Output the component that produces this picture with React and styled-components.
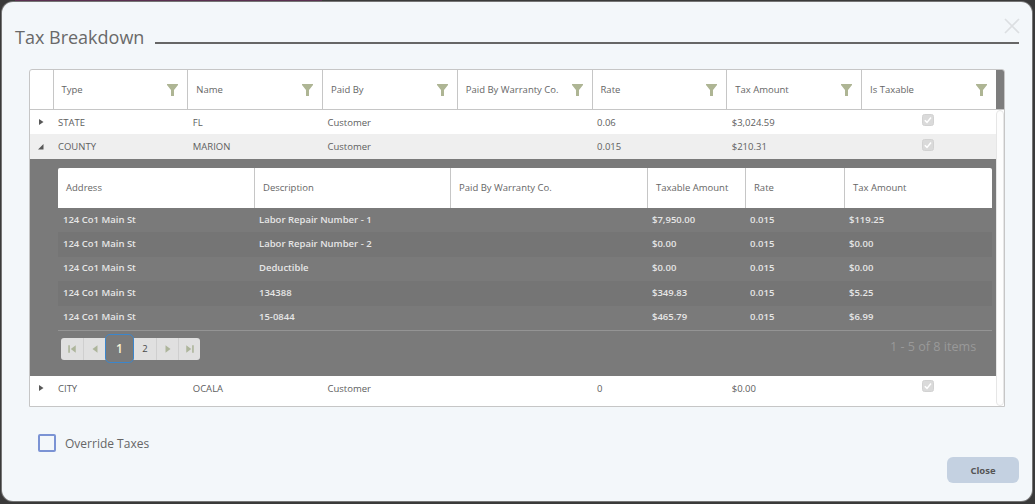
import React from 'react';
import styled, { createGlobalStyle } from 'styled-components';

const GlobalStyle = createGlobalStyle`
  html, body {
    margin: 0;
    padding: 0;
    background: #3a3a3a;
    font-family: "Open Sans", "Liberation Sans", sans-serif;
  }
`;

const Page = styled.div`
  width: 1035px;
  height: 504px;
  padding: 2px 3px 3px 2px;
  box-sizing: border-box;
  overflow: hidden;
  background: linear-gradient(#5a3050, #5a3050) 15px 0 / 307px 1px no-repeat, #3a3a3a;
`;

const Dialog = styled.div`
  position: relative;
  height: 100%;
  box-sizing: border-box;
  background: #f3f7fa;
  border-radius: 11px;
  box-shadow: 0 0 0 1px #757575;
  padding: 23px 13px 0 13px;
  display: flex;
  flex-direction: column;
`;

const TitleRow = styled.div`
  display: flex;
  align-items: flex-end;
  gap: 11px;
  height: 24px;
`;

const Title = styled.h2`
  margin: 0;
  font-size: 18px;
  line-height: 24px;
  font-weight: 400;
  color: #696969;
  white-space: nowrap;
`;

const TitleRule = styled.div`
  flex: 1;
  height: 2px;
  margin-bottom: 5px;
  background: #666;
`;

const CloseX = styled.button`
  position: absolute;
  top: 15px;
  right: 11px;
  width: 18px;
  height: 18px;
  padding: 0;
  border: 0;
  background: none;
  color: #dcdfe2;
`;

const Grid = styled.div`
  margin: 20px 0 0 14px;
  width: 976px;
  height: 338px;
  box-sizing: border-box;
  border: 1px solid #c6c6c6;
  border-top-left-radius: 3px;
  border-top-right-radius: 3px;
  background: #fff;
  position: relative;
  overflow: hidden;
`;

const MasterHeader = styled.div`
  display: grid;
  grid-template-columns: 22.5px repeat(7, 134.75px) 1fr;
  height: 39px;
  border-bottom: 1px solid #c6c6c6;
`;

const HeadCell = styled.div`
  display: flex;
  align-items: center;
  justify-content: space-between;
  padding: ${p => (p.$detail ? '0 0 2px 8px' : '0 9px 0 8px')};
  border-left: ${p => (p.$first ? '0' : '1px solid #c6c6c6')};
  font-size: 9.5px;
  color: #666;
  white-space: nowrap;
`;

const ScrollCap = styled.div`
  background: #7d7d7d;
`;

const Scroll = styled.div`
  position: absolute;
  top: 40px;
  right: 0;
  bottom: 0;
  width: 8px;
  box-sizing: border-box;
  background: #fdfdfd;
  border: 1px solid #e6e6e6;
  border-radius: 4px;
`;

const MasterRow = styled.div`
  display: grid;
  grid-template-columns: 22.5px repeat(7, 134.75px);
  align-items: center;
  box-sizing: border-box;
  height: ${p => p.$h}px;
  padding-bottom: ${p => p.$pad || 0}px;
  width: 966.25px;
  background: ${p => (p.$alt ? '#efefef' : '#fff')};
  font-size: 9.5px;
  color: #606060;
`;

const Cell = styled.div`
  padding-left: 5.5px;
  white-space: nowrap;
`;

const ArrowCell = styled.div`
  display: flex;
  justify-content: center;
  color: #585858;
`;

const CheckCell = styled.div`
  display: flex;
  justify-content: center;
  padding-bottom: 4px;
`;

const DetailArea = styled.div`
  width: 966.25px;
  height: 217px;
  box-sizing: border-box;
  background: #7a7a7a;
  padding: 9px 4px 0 28px;
`;

const DetailHeader = styled.div`
  display: grid;
  grid-template-columns: 196px 196px 197px 98px 99px 1fr;
  height: 40px;
  background: #fff;
  border-radius: 2px 2px 0 0;
`;

const DetailRow = styled.div`
  display: grid;
  grid-template-columns: 196px 196px 197px 98px 99px 1fr;
  align-items: center;
  box-sizing: border-box;
  height: 24.4px;
  padding-bottom: 2px;
  background: ${p => (p.$alt ? '#757575' : '#7a7a7a')};
  font-size: 9.5px;
  font-weight: 600;
  color: #e6e6e6;
`;

const DetailCell = styled.div`
  padding-left: 5px;
  white-space: nowrap;
`;

const Pager = styled.div`
  display: flex;
  align-items: flex-start;
  justify-content: space-between;
  height: 46px;
  border-top: 1px solid #949494;
  box-sizing: border-box;
  padding: 7px 16px 0 3px;
`;

const PagerButtons = styled.div`
  display: flex;
  align-items: center;
  height: 22px;
  border-radius: 3px;
  background: #e0e0e0;
`;

const PageBtn = styled.div`
  flex: none;
  width: 22px;
  height: 22px;
  box-sizing: border-box;
  display: flex;
  align-items: center;
  justify-content: center;
  border-left: ${p => (p.$first ? '0' : '1px solid #cfcfcf')};
  color: #adb59b;
`;

const PageNum = styled.div`
  flex: none;
  width: 22px;
  height: 22px;
  display: flex;
  align-items: center;
  justify-content: center;
  font-size: 9.5px;
  color: #4a4a4a;
`;

const CurrentPage = styled.div`
  flex: none;
  width: 29px;
  height: 29px;
  box-sizing: border-box;
  display: flex;
  align-items: center;
  justify-content: center;
  border: 1.5px solid #3b86cc;
  border-radius: 5px;
  background: #7a7a7a;
  font-size: 12px;
  font-weight: 600;
  color: #fbf3d6;
`;

const PagerInfo = styled.div`
  margin-top: -1px;
  font-size: 12.6px;
  line-height: 20px;
  color: #999;
`;

const Footer = styled.div`
  display: flex;
  align-items: center;
  gap: 9px;
  margin: 27px 0 0 23px;
  font-size: 12px;
  color: #666;
`;

const OverrideBox = styled.span`
  width: 18px;
  height: 18px;
  box-sizing: border-box;
  border: 2px solid #7b93d4;
  border-radius: 2px;
  background: #f3f7fa;
`;

const CloseButton = styled.button`
  position: absolute;
  right: 13px;
  bottom: 18px;
  width: 72px;
  height: 26px;
  border: 0;
  border-radius: 6px;
  background: #c4d1e1;
  color: #555;
  font-family: inherit;
  font-size: 9.5px;
  font-weight: 700;
`;

const Funnel = () => (
  <svg width="11" height="12" viewBox="0 0 11 12">
    <path d="M0 0h11v1L7 6v6H4V6L0 1z" fill="#aeb594" />
  </svg>
);

const Tri = ({ d, size = 8 }) => (
  <svg width={size} height={size} viewBox="0 0 8 8">
    <path d={d} fill="currentColor" />
  </svg>
);

const Tick = () => (
  <svg width="12" height="12" viewBox="0 0 12 12">
    <rect x="0.5" y="0.5" width="11" height="11" rx="2" fill="#dadada" stroke="#d2d2d2" />
    <path d="M2.8 6.2l2.2 2.2 4-4.8" fill="none" stroke="#fff" strokeWidth="1.5" />
  </svg>
);

const masterCols = ['Type', 'Name', 'Paid By', 'Paid By Warranty Co.', 'Rate', 'Tax Amount', 'Is Taxable'];
const detailCols = ['Address', 'Description', 'Paid By Warranty Co.', 'Taxable Amount', 'Rate', 'Tax Amount'];
const detailRows = [
  ['Labor Repair Number - 1', '$7,950.00', '$119.25'],
  ['Labor Repair Number - 2', '$0.00', '$0.00'],
  ['Deductible', '$0.00', '$0.00'],
  ['134388', '$349.83', '$5.25'],
  ['15-0844', '$465.79', '$6.99'],
];

const Row = ({ type, name, rate, tax, open, h, pad }) => (
  <MasterRow $alt={open} $h={h} $pad={pad}>
    <ArrowCell>{open ? <Tri d="M1 6.5h5.5V1z" /> : <Tri d="M2 1l4.5 3L2 7z" />}</ArrowCell>
    <Cell>{type}</Cell>
    <Cell>{name}</Cell>
    <Cell>Customer</Cell>
    <Cell />
    <Cell>{rate}</Cell>
    <Cell>{tax}</Cell>
    <CheckCell><Tick /></CheckCell>
  </MasterRow>
);

export default function App() {
  return (
    <Page>
      <GlobalStyle />
      <Dialog>
        <TitleRow>
          <Title>Tax Breakdown</Title>
          <TitleRule />
        </TitleRow>
        <CloseX aria-label="Close">
          <svg width="18" height="18" viewBox="0 0 18 18">
            <path d="M2 2l14 14M16 2L2 16" stroke="currentColor" strokeWidth="1.6" />
          </svg>
        </CloseX>
        <Grid>
          <MasterHeader>
            <HeadCell $first />
            {masterCols.map(c => (
              <HeadCell key={c}>{c}<Funnel /></HeadCell>
            ))}
            <ScrollCap />
          </MasterHeader>
          <Row type="STATE" name="FL" rate="0.06" tax="$3,024.59" h={24} />
          <Row type="COUNTY" name="MARION" rate="0.015" tax="$210.31" open h={25} />
          <DetailArea>
            <DetailHeader>
              {detailCols.map((c, i) => (
                <HeadCell key={c} $detail $first={i === 0}>{c}</HeadCell>
              ))}
            </DetailHeader>
            {detailRows.map((r, i) => (
              <DetailRow key={r[0]} $alt={i % 2 === 1}>
                <DetailCell>124 Co1 Main St</DetailCell>
                <DetailCell>{r[0]}</DetailCell>
                <DetailCell />
                <DetailCell>{r[1]}</DetailCell>
                <DetailCell>0.015</DetailCell>
                <DetailCell>{r[2]}</DetailCell>
              </DetailRow>
            ))}
            <Pager>
              <PagerButtons>
                <PageBtn $first><Tri size={10} d="M1 1h1.3v6H1zM7 1v6L3 4z" /></PageBtn>
                <PageBtn><Tri size={10} d="M6 1v6L2 4z" /></PageBtn>
                <CurrentPage>1</CurrentPage>
                <PageNum>2</PageNum>
                <PageBtn><Tri size={10} d="M2 1v6l4-3z" /></PageBtn>
                <PageBtn><Tri size={10} d="M7 1H5.7v6H7zM1 1v6l4-3z" /></PageBtn>
              </PagerButtons>
              <PagerInfo>1 - 5 of 8 items</PagerInfo>
            </Pager>
          </DetailArea>
          <Row type="CITY" name="OCALA" rate="0" tax="$0.00" h={30} pad={6} />
          <Scroll />
        </Grid>
        <Footer>
          <OverrideBox />
          Override Taxes
        </Footer>
        <CloseButton>Close</CloseButton>
      </Dialog>
    </Page>
  );
}
